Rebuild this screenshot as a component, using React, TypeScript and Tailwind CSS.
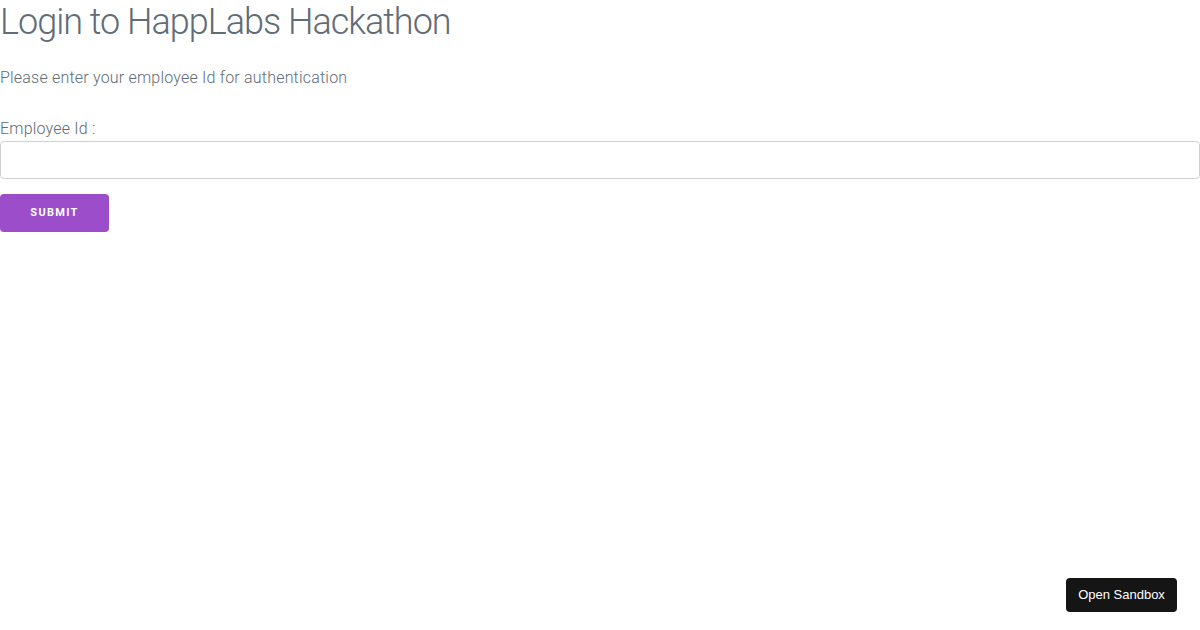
import React, { useState } from 'react';

export default function App() {
  const [employeeId, setEmployeeId] = useState('');

  return (
    <div className="min-h-screen bg-white font-['Roboto',sans-serif] font-light tracking-[0.2px] text-[#606c76]">
      <h2 className="mb-5 text-[36px] leading-[45px] font-light tracking-[-1px]">
        Login to HappLabs Hackathon
      </h2>
      <p className="mb-[25px] text-[16px] leading-[25.6px]">
        Please enter your employee Id for authentication
      </p>
      <form onSubmit={(e) => e.preventDefault()}>
        <div className="text-[16px] leading-[25.6px]">Employee Id :</div>
        <input
          type="text"
          value={employeeId}
          onChange={(e) => setEmployeeId(e.target.value)}
          className="mb-[15px] block h-[38px] w-full rounded-[4px] border border-[#d1d1d1] bg-transparent px-[10px] py-[6px] text-[16px] outline-none"
        />
        <button
          type="submit"
          className="h-[38px] w-[109px] rounded-[4px] bg-[#9b4dca] text-[11px] leading-[38px] font-bold tracking-[1.3px] text-white uppercase"
        >
          Submit
        </button>
      </form>

      <button className="fixed right-[23px] bottom-[18px] h-[34px] w-[111px] rounded-[4px] bg-[#151515] font-['Liberation_Sans',sans-serif] text-[13px] font-normal tracking-normal text-white">
        Open Sandbox
      </button>
    </div>
  );
}
